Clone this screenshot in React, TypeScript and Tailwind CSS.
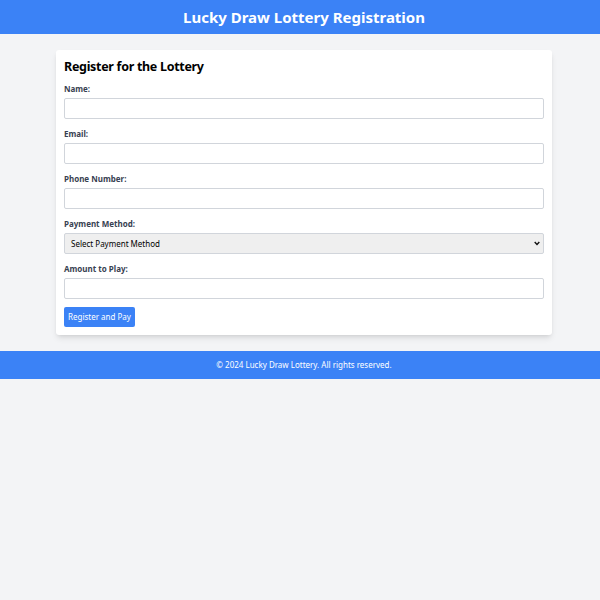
import React from "react";

const fields = [
  { id: "name", label: "Name:", type: "text" },
  { id: "email", label: "Email:", type: "email" },
  { id: "phone", label: "Phone Number:", type: "tel" },
];

function Field({ id, label, children }: { id: string; label: string; children: React.ReactNode }) {
  return (
    <div className="mb-[6px]">
      <label htmlFor={id} className="block h-[18px] text-[8px] leading-[17px] font-bold text-[#374151]">
        {label}
      </label>
      {children}
    </div>
  );
}

export default function App() {
  return (
    <div className="min-h-[600px] bg-[#f3f4f6] font-['Noto_Sans',sans-serif]">
      <header className="h-[34px] bg-[#3b82f6] flex items-center justify-center pl-2">
        <h1 className="text-[15px] font-bold text-white">Lucky Draw Lottery Registration</h1>
      </header>

      <main className="py-4">
        <div className="ml-[56px] w-[496px] bg-white rounded-[3px] shadow-md px-2 pt-[7px] pb-2">
          <h2 className="text-[12.5px] tracking-[-0.3px] leading-[20px] font-bold text-black mb-[3px]">
            Register for the Lottery
          </h2>

          {fields.map((f) => (
            <Field key={f.id} id={f.id} label={f.label}>
              <input
                id={f.id}
                type={f.type}
                className="block w-full h-[21px] border border-[#d1d5db] rounded-[2px] bg-white"
              />
            </Field>
          ))}

          <Field id="payment" label="Payment Method:">
            <div className="relative">
              <select
                id="payment"
                className="block w-full h-[21px] appearance-none border border-[#d1d5db] rounded-[2px] bg-[#efefef] text-[8px] text-black pl-[6px]"
              >
                <option>Select Payment Method</option>
              </select>
              {/* dropdown chevron */}
              <svg
                className="pointer-events-none absolute right-[4px] top-[8px]"
                width="6"
                height="5"
                viewBox="0 0 6 5"
                fill="none"
                stroke="#111"
                strokeWidth="1.4"
              >
                <path d="M0.7 1l2.3 2.5L5.3 1" />
              </svg>
            </div>
          </Field>

          <Field id="amount" label="Amount to Play:">
            <input id="amount" type="number" className="block w-full h-[21px] border border-[#d1d5db] rounded-[2px] bg-white" />
          </Field>

          <button className="block mt-2 h-[20px] px-1 bg-[#3b82f6] text-white text-[8px] rounded-[2px]">
            Register and Pay
          </button>
        </div>
      </main>

      <footer className="h-[28px] bg-[#3b82f6] flex items-center justify-center pl-2">
        <p className="text-[8px] text-white">© 2024 Lucky Draw Lottery. All rights reserved.</p>
      </footer>
    </div>
  );
}
